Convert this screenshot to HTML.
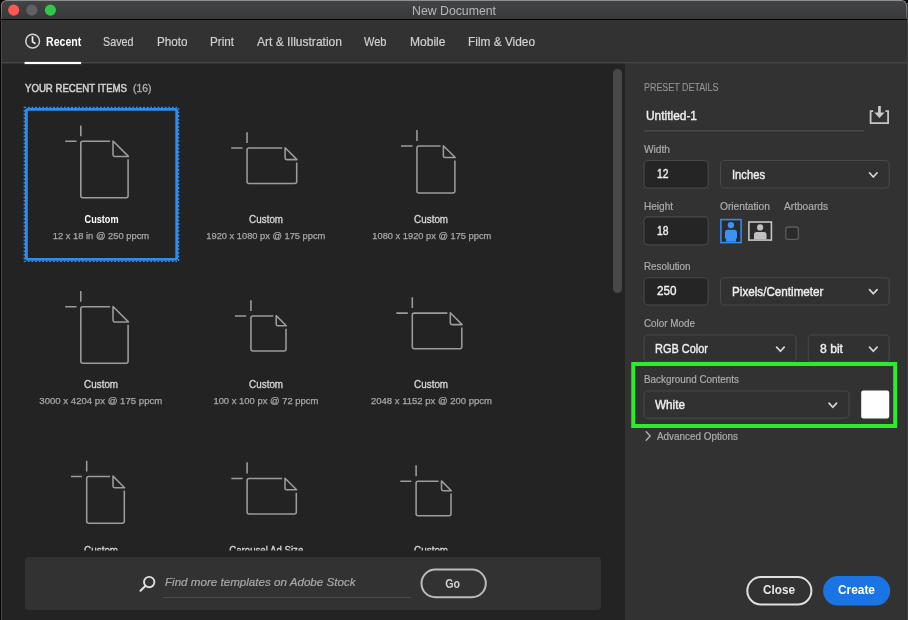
<!DOCTYPE html>
<html><head><meta charset="utf-8"><title>New Document</title>
<style>
html,body{margin:0;padding:0;background:#222;}
body{width:908px;height:620px;position:relative;overflow:hidden;font-family:"Liberation Sans",sans-serif;}
.a{position:absolute;box-sizing:border-box;}
.t{position:absolute;white-space:pre;display:block;}
.in{background:#222;border:1px solid #424242;border-radius:4px;}
.sel{background:#303030;border:1px solid #464646;border-radius:4px;}
</style></head><body>
<!-- window frame -->
<div class="a" style="left:0;top:0;width:908px;height:620px;background:#232323;"></div>
<!-- title bar -->
<div class="a" style="left:0;top:0;width:908px;height:20px;background:#000;"></div>
<div class="a" style="left:1px;top:0;width:906px;height:19px;background:linear-gradient(#909090,#5a5a5c);border-radius:5.5px 5.5px 0 0;"></div>
<div class="a" style="left:2px;top:1px;width:904px;height:18px;background:linear-gradient(#424345,#38393b);border-radius:4.5px 4.5px 0 0;"></div>
<!-- tab bar -->
<div class="a" style="left:0;top:20px;width:908px;height:43px;background:#323232;"></div>
<!-- right panel -->
<div class="a" style="left:625px;top:63px;width:283px;height:557px;background:#323232;"></div>
<!-- scrollbar -->
<div class="a" style="left:613px;top:69.2px;width:9.3px;height:223.8px;border-radius:4.6px;background:#484848;"></div>
<!-- left edge -->
<div class="a" style="left:0;top:3px;width:1px;height:617px;background:#050505;"></div>
<div class="a" style="left:1px;top:20px;width:1px;height:600px;background:#484848;"></div>
<div class="a" style="left:907px;top:3px;width:1px;height:617px;background:#444;"></div>
<!-- selected card -->

<!-- search bar -->
<div class="a" style="left:24.5px;top:556.8px;width:576.3px;height:53.2px;background:#323232;border-radius:4px;"></div>
<div class="a" style="left:163px;top:597px;width:248.3px;height:1px;background:#4c4c4c;"></div>
<!-- right panel fields -->


<svg class="a" style="left:0;top:0" width="908" height="620" viewBox="0 0 908 620">
<rect x="24.3" y="107.4" width="154.3" height="153.9" fill="none" stroke="#2d8cf0" stroke-width="1.3" stroke-dasharray="1.8 1.8"/>
<rect x="26.35" y="109.35" width="150.4" height="150" rx="1.8" fill="none" stroke="#2d8cf0" stroke-width="2.9"/>
<circle cx="13.7" cy="10.1" r="5.6" fill="#fc5753"/>
<circle cx="31.8" cy="10.1" r="5.6" fill="#606062"/>
<circle cx="50.4" cy="10.1" r="5.6" fill="#33c748"/>
<!-- clock -->
<circle cx="32.65" cy="41.15" r="6.85" fill="none" stroke="#d4d4d4" stroke-width="1.5"/>
<path d="M32.5 36.3V41.7L35.5 43.7" fill="none" stroke="#ececec" stroke-width="1.7"/>
<!-- doc icons -->
<g>
<clipPath id="cl"><rect x="0" y="63" width="613" height="487.5"/></clipPath>
<g clip-path="url(#cl)">
<path d="M80.8 125.5V136.3M65.2 141.3H76.5M110.10 141.3H82.8Q80.8 141.3 80.8 143.3V195.7Q80.8 197.7 82.8 197.7H126.1Q128.1 197.7 128.1 195.7V159.30M113.0 141.0L128.4 156.4H114.6Q113.0 156.4 113.0 154.8Z" fill="none" stroke="#9c9c9c" stroke-width="1.55" stroke-linejoin="round" stroke-linecap="butt"/>
<path d="M247.05 132.2V142.9M231.2 148H242.6M282.20 148H249.05Q247.05 148 247.05 150.0V181.55Q247.05 183.55 249.05 183.55H294.7Q296.7 183.55 296.7 181.55V162.50M285.1 147.7L297.0 159.6H286.70000000000005Q285.1 159.6 285.1 158.0Z" fill="none" stroke="#9c9c9c" stroke-width="1.55" stroke-linejoin="round" stroke-linecap="butt"/>
<path d="M416.95 130V141.1M401 146H412.6M440.50 146H418.95Q416.95 146 416.95 148.0V190.9Q416.95 192.9 418.95 192.9H452.9Q454.9 192.9 454.9 190.9V160.40M443.4 145.7L455.2 157.5H445.0Q443.4 157.5 443.4 155.9Z" fill="none" stroke="#9c9c9c" stroke-width="1.55" stroke-linejoin="round" stroke-linecap="butt"/>
<path d="M80.8 291V301.8M65.2 306.8H76.5M110.10 306.8H82.8Q80.8 306.8 80.8 308.8V361.2Q80.8 363.2 82.8 363.2H126.1Q128.1 363.2 128.1 361.2V324.80M113.0 306.5L128.4 321.9H114.6Q113.0 321.9 113.0 320.29999999999995Z" fill="none" stroke="#9c9c9c" stroke-width="1.55" stroke-linejoin="round" stroke-linecap="butt"/>
<path d="M250.95 300.2V311.1M234.9 315.95H246.2M273.30 315.95H252.95Q250.95 315.95 250.95 317.95V348.9Q250.95 350.9 252.95 350.9H284.0Q286 350.9 286 348.9V328.65M276.2 315.65L286.3 325.75H277.8Q276.2 325.75 276.2 324.15Z" fill="none" stroke="#9c9c9c" stroke-width="1.55" stroke-linejoin="round" stroke-linecap="butt"/>
<path d="M412.3 297.3V308.1M396.3 313.1H407.8M447.40 313.1H414.3Q412.3 313.1 412.3 315.1V346.7Q412.3 348.7 414.3 348.7H459.8Q461.8 348.7 461.8 346.7V327.50M450.3 312.8L462.1 324.6H451.90000000000003Q450.3 324.6 450.3 323.0Z" fill="none" stroke="#9c9c9c" stroke-width="1.55" stroke-linejoin="round" stroke-linecap="butt"/>
<path d="M86.7 460.8V471.6M71 476.4H81.9M110.10 476.4H88.7Q86.7 476.4 86.7 478.4V521.3Q86.7 523.3 88.7 523.3H122.3Q124.3 523.3 124.3 521.3V490.60M113.0 476.09999999999997L124.6 487.7H114.6Q113.0 487.7 113.0 486.09999999999997Z" fill="none" stroke="#9c9c9c" stroke-width="1.55" stroke-linejoin="round" stroke-linecap="butt"/>
<path d="M247.1 462.3V473.5M231.3 478.5H242.6M282.10 478.5H249.1Q247.1 478.5 247.1 480.5V512.0Q247.1 514 249.1 514H294.3Q296.3 514 296.3 512.0V492.70M285.0 478.2L296.6 489.8H286.6Q285.0 489.8 285.0 488.2Z" fill="none" stroke="#9c9c9c" stroke-width="1.55" stroke-linejoin="round" stroke-linecap="butt"/>
<path d="M416.1 465.2V476.3M400.3 481.2H411.3M438.60 481.2H418.1Q416.1 481.2 416.1 483.2V513.7Q416.1 515.7 418.1 515.7H449.0Q451 515.7 451 513.7V493.60M441.5 480.9L451.3 490.7H443.1Q441.5 490.7 441.5 489.09999999999997Z" fill="none" stroke="#9c9c9c" stroke-width="1.55" stroke-linejoin="round" stroke-linecap="butt"/>
</g>
</g>
<!-- search icon -->
<circle cx="149.2" cy="582.1" r="5.2" fill="none" stroke="#dedede" stroke-width="1.9"/>
<path d="M145.4 586.1L140.5 590.7" stroke="#dedede" stroke-width="2.1" stroke-linecap="round"/>
<rect x="644" y="130.2" width="220" height="1.4" fill="#4c4c4c"/>
<rect x="2" y="62" width="905" height="1.5" fill="#444444"/>
<rect x="24.6" y="61.9" width="56.5" height="2.2" fill="#ffffff"/>
<!-- buttons -->
<rect x="421.5" y="569.6" width="64.3" height="27.6" rx="13.8" fill="none" stroke="#bcbcbc" stroke-width="2"/>
<rect x="747.3" y="577.1" width="64.1" height="27.4" rx="13.7" fill="none" stroke="#e0e0e0" stroke-width="2"/>
<rect x="823.1" y="576.1" width="67.1" height="29.4" rx="14.7" fill="#1b74e4"/>
<!-- fields -->
<rect x="644.05" y="160.45" width="64.10" height="27.50" rx="4" fill="#252525" stroke="#484848" stroke-width="1.1"/>
<rect x="720.55" y="160.45" width="168.60" height="27.50" rx="4" fill="#313131" stroke="#484848" stroke-width="1.1"/>
<rect x="644.05" y="216.85" width="64.10" height="28.00" rx="4" fill="#252525" stroke="#484848" stroke-width="1.1"/>
<rect x="644.05" y="277.75" width="64.10" height="27.20" rx="4" fill="#252525" stroke="#484848" stroke-width="1.1"/>
<rect x="720.55" y="277.75" width="168.60" height="27.20" rx="4" fill="#313131" stroke="#484848" stroke-width="1.1"/>
<rect x="644.05" y="334.95" width="152.00" height="27.20" rx="4" fill="#313131" stroke="#484848" stroke-width="1.1"/>
<rect x="808.25" y="334.95" width="80.90" height="27.20" rx="4" fill="#313131" stroke="#484848" stroke-width="1.1"/>
<rect x="644.05" y="390.95" width="204.90" height="27.20" rx="4" fill="#313131" stroke="#484848" stroke-width="1.1"/>
<rect x="861.2" y="390.6" width="28" height="27.9" rx="2.2" fill="#ffffff"/>
<path d="M633.25 364.1H895.2V426.1H633.25Z" fill="none" stroke="#2deb2d" stroke-width="4"/>
<!-- save preset icon -->
<path d="M873.2 111.1H870.6V123.1H888.1V111.1H885.4" fill="none" stroke="#c6c6c6" stroke-width="1.8"/>
<path d="M878.1 106H880.8V112.5H884.6L879.45 118L874.3 112.5H878.1Z" fill="#cacaca"/>
<!-- chevrons -->
<path d="M869.5 172.8L873.3 177.0L877.0999999999999 172.8" fill="none" stroke="#d6d6d6" stroke-width="1.7" stroke-linecap="round" stroke-linejoin="round"/>
<path d="M869.5 289.59999999999997L873.3 293.8L877.0999999999999 289.59999999999997" fill="none" stroke="#d6d6d6" stroke-width="1.7" stroke-linecap="round" stroke-linejoin="round"/>
<path d="M776.6 347.09999999999997L780.4 351.3L784.1999999999999 347.09999999999997" fill="none" stroke="#d6d6d6" stroke-width="1.7" stroke-linecap="round" stroke-linejoin="round"/>
<path d="M869.5 347.09999999999997L873.3 351.3L877.0999999999999 347.09999999999997" fill="none" stroke="#d6d6d6" stroke-width="1.7" stroke-linecap="round" stroke-linejoin="round"/>
<path d="M829.0 403.09999999999997L832.8 407.3L836.5999999999999 403.09999999999997" fill="none" stroke="#d6d6d6" stroke-width="1.7" stroke-linecap="round" stroke-linejoin="round"/>
<path d="M646.2 431.8L650.2 436L646.2 440.2" fill="none" stroke="#b0b0b0" stroke-width="1.4" stroke-linecap="round" stroke-linejoin="round"/>
<!-- portrait -->
<rect x="720.9" y="219.6" width="20.2" height="23" fill="#2b2b2b" stroke="#2d8cf0" stroke-width="1.6"/>
<circle cx="730.9" cy="225.1" r="3.2" fill="#3a92f2"/>
<path d="M724.9 238.6V232.6Q724.9 229.7 727.8 229.7H734.1Q737 229.7 737 232.6V238.6H735.9V241.8H726.1V238.6Z" fill="#3a92f2"/>
<!-- landscape -->
<rect x="748.9" y="222" width="22.5" height="18.1" fill="#2b2b2b" stroke="#c4c4c4" stroke-width="1.6"/>
<circle cx="760.1" cy="227.4" r="3.1" fill="#c0c0c0"/>
<path d="M754 239.4V234.6Q754 232.1 756.5 232.1H764Q766.5 232.1 766.5 234.6V239.4Z" fill="#c0c0c0"/>
<!-- checkbox -->
<rect x="785.8" y="227" width="12.6" height="12.4" rx="2.2" fill="#2a2a2a" stroke="#5c5c5c" stroke-width="1.3"/>
</svg>
<div class="a" style="left:0;top:0;width:908px;height:620px;will-change:transform;">
<span class="t" style="left:412.78px;top:2.50px;height:16px;line-height:16px;font-size:12px;color:#b8b8b8;transform:scaleX(1.0240);transform-origin:center center;">New Document</span>
<span class="t" style="left:45.70px;top:32.80px;height:18px;line-height:18px;font-size:13px;color:#ffffff;transform:scaleX(0.8141);transform-origin:left center;font-weight:700;">Recent</span>
<span class="t" style="left:103.00px;top:32.80px;height:18px;line-height:18px;font-size:13px;color:#d0d0d0;transform:scaleX(0.8271);transform-origin:left center;-webkit-text-stroke:0.2px #d0d0d0;">Saved</span>
<span class="t" style="left:157.00px;top:32.80px;height:18px;line-height:18px;font-size:13px;color:#d0d0d0;transform:scaleX(0.8975);transform-origin:left center;-webkit-text-stroke:0.2px #d0d0d0;">Photo</span>
<span class="t" style="left:210.00px;top:32.80px;height:18px;line-height:18px;font-size:13px;color:#d0d0d0;transform:scaleX(0.8977);transform-origin:left center;-webkit-text-stroke:0.2px #d0d0d0;">Print</span>
<span class="t" style="left:256.50px;top:32.80px;height:18px;line-height:18px;font-size:13px;color:#d0d0d0;transform:scaleX(0.9263);transform-origin:left center;-webkit-text-stroke:0.2px #d0d0d0;">Art &amp; Illustration</span>
<span class="t" style="left:364.00px;top:32.80px;height:18px;line-height:18px;font-size:13px;color:#d0d0d0;transform:scaleX(0.8491);transform-origin:left center;-webkit-text-stroke:0.2px #d0d0d0;">Web</span>
<span class="t" style="left:410.00px;top:32.80px;height:18px;line-height:18px;font-size:13px;color:#d0d0d0;transform:scaleX(0.9270);transform-origin:left center;-webkit-text-stroke:0.2px #d0d0d0;">Mobile</span>
<span class="t" style="left:468.00px;top:32.80px;height:18px;line-height:18px;font-size:13px;color:#d0d0d0;transform:scaleX(0.9120);transform-origin:left center;-webkit-text-stroke:0.2px #d0d0d0;">Film &amp; Video</span>
<span class="t" style="left:24.50px;top:81.50px;height:14px;line-height:14px;font-size:10px;color:#d0d0d0;transform:scaleX(0.9628);transform-origin:left center;-webkit-text-stroke:0.5px #d0d0d0;">YOUR RECENT ITEMS</span>
<span class="t" style="left:132.50px;top:81.50px;height:14px;line-height:14px;font-size:10px;color:#b0b0b0;transform:scaleX(1.0395);transform-origin:left center;-webkit-text-stroke:0.3px #b0b0b0;">(16)</span>
<span class="t" style="left:81.65px;top:211.70px;height:15px;line-height:15px;font-size:10.5px;color:#ffffff;transform:scaleX(0.8697);transform-origin:center center;font-weight:700;">Custom</span>
<span class="t" style="left:52.28px;top:228.80px;height:13px;line-height:13px;font-size:9.5px;color:#a6a6a6;transform:scaleX(0.9863);transform-origin:center center;-webkit-text-stroke:0.25px #a6a6a6;">12 x 18 in @ 250 ppcm</span>
<span class="t" style="left:248.11px;top:211.70px;height:15px;line-height:15px;font-size:10.5px;color:#d8d8d8;transform:scaleX(0.9396);transform-origin:center center;-webkit-text-stroke:0.3px #d8d8d8;">Custom</span>
<span class="t" style="left:205.39px;top:228.80px;height:13px;line-height:13px;font-size:9.5px;color:#a6a6a6;transform:scaleX(0.9784);transform-origin:center center;-webkit-text-stroke:0.25px #a6a6a6;">1920 x 1080 px @ 175 ppcm</span>
<span class="t" style="left:413.31px;top:211.70px;height:15px;line-height:15px;font-size:10.5px;color:#d8d8d8;transform:scaleX(0.9396);transform-origin:center center;-webkit-text-stroke:0.3px #d8d8d8;">Custom</span>
<span class="t" style="left:370.59px;top:228.80px;height:13px;line-height:13px;font-size:9.5px;color:#a6a6a6;transform:scaleX(0.9784);transform-origin:center center;-webkit-text-stroke:0.25px #a6a6a6;">1080 x 1920 px @ 175 ppcm</span>
<span class="t" style="left:83.11px;top:377.30px;height:15px;line-height:15px;font-size:10.5px;color:#d8d8d8;transform:scaleX(0.9396);transform-origin:center center;-webkit-text-stroke:0.3px #d8d8d8;">Custom</span>
<span class="t" style="left:40.39px;top:394.40px;height:13px;line-height:13px;font-size:9.5px;color:#a6a6a6;transform:scaleX(1.0113);transform-origin:center center;-webkit-text-stroke:0.25px #a6a6a6;">3000 x 4204 px @ 175 ppcm</span>
<span class="t" style="left:248.11px;top:377.30px;height:15px;line-height:15px;font-size:10.5px;color:#d8d8d8;transform:scaleX(0.9396);transform-origin:center center;-webkit-text-stroke:0.3px #d8d8d8;">Custom</span>
<span class="t" style="left:213.32px;top:394.40px;height:13px;line-height:13px;font-size:9.5px;color:#a6a6a6;transform:scaleX(0.9928);transform-origin:center center;-webkit-text-stroke:0.25px #a6a6a6;">100 x 100 px @ 72 ppcm</span>
<span class="t" style="left:413.31px;top:377.30px;height:15px;line-height:15px;font-size:10.5px;color:#d8d8d8;transform:scaleX(0.9396);transform-origin:center center;-webkit-text-stroke:0.3px #d8d8d8;">Custom</span>
<span class="t" style="left:370.94px;top:394.40px;height:13px;line-height:13px;font-size:9.5px;color:#a6a6a6;transform:scaleX(1.0006);transform-origin:center center;-webkit-text-stroke:0.25px #a6a6a6;">2048 x 1152 px @ 200 ppcm</span>
<span class="t" style="left:83.11px;top:542.70px;height:15px;line-height:15px;font-size:10.5px;color:#d8d8d8;transform:scaleX(0.9396);transform-origin:center center;-webkit-text-stroke:0.3px #d8d8d8;">Custom</span>
<span class="t" style="left:225.93px;top:542.70px;height:15px;line-height:15px;font-size:10.5px;color:#d8d8d8;transform:scaleX(0.9187);transform-origin:center center;-webkit-text-stroke:0.3px #d8d8d8;">Carousel Ad Size</span>
<span class="t" style="left:413.31px;top:542.70px;height:15px;line-height:15px;font-size:10.5px;color:#d8d8d8;transform:scaleX(0.9396);transform-origin:center center;-webkit-text-stroke:0.3px #d8d8d8;">Custom</span>
<span class="t" style="left:165.00px;top:574.20px;height:16px;line-height:16px;font-size:11.5px;color:#a8a8a8;transform:scaleX(1.0090);transform-origin:left center;-webkit-text-stroke:0.2px #a8a8a8;font-style:italic;">Find more templates on Adobe Stock</span>
<span class="t" style="left:444.32px;top:575.90px;height:17px;line-height:17px;font-size:12.5px;color:#d0d0d0;transform:scaleX(0.8526);transform-origin:center center;font-weight:700;">Go</span>
<span class="t" style="left:643.50px;top:81.00px;height:14px;line-height:14px;font-size:10px;color:#949494;transform:scaleX(0.8917);transform-origin:left center;-webkit-text-stroke:0.1px #949494;">PRESET DETAILS</span>
<span class="t" style="left:646.30px;top:107.70px;height:17px;line-height:17px;font-size:12.5px;color:#f0f0f0;transform:scaleX(0.9533);transform-origin:left center;-webkit-text-stroke:0.38px #f0f0f0;">Untitled-1</span>
<span class="t" style="left:643.50px;top:141.50px;height:15px;line-height:15px;font-size:10.5px;color:#acacac;transform:scaleX(0.9686);transform-origin:left center;-webkit-text-stroke:0.2px #acacac;">Width</span>
<span class="t" style="left:657.00px;top:165.80px;height:17px;line-height:17px;font-size:12.5px;color:#f0f0f0;transform:scaleX(0.8270);transform-origin:left center;-webkit-text-stroke:0.38px #f0f0f0;">12</span>
<span class="t" style="left:732.00px;top:166.90px;height:17px;line-height:17px;font-size:12.5px;color:#f0f0f0;transform:scaleX(0.8957);transform-origin:left center;-webkit-text-stroke:0.38px #f0f0f0;">Inches</span>
<span class="t" style="left:643.50px;top:199.00px;height:15px;line-height:15px;font-size:10.5px;color:#acacac;transform:scaleX(0.9552);transform-origin:left center;-webkit-text-stroke:0.2px #acacac;">Height</span>
<span class="t" style="left:720.00px;top:199.00px;height:15px;line-height:15px;font-size:10.5px;color:#acacac;transform:scaleX(0.9732);transform-origin:left center;-webkit-text-stroke:0.2px #acacac;">Orientation</span>
<span class="t" style="left:784.00px;top:199.00px;height:15px;line-height:15px;font-size:10.5px;color:#acacac;transform:scaleX(0.9664);transform-origin:left center;-webkit-text-stroke:0.2px #acacac;">Artboards</span>
<span class="t" style="left:657.00px;top:223.00px;height:17px;line-height:17px;font-size:12.5px;color:#f0f0f0;transform:scaleX(0.8270);transform-origin:left center;-webkit-text-stroke:0.38px #f0f0f0;">18</span>
<span class="t" style="left:643.50px;top:258.50px;height:15px;line-height:15px;font-size:10.5px;color:#acacac;transform:scaleX(0.9370);transform-origin:left center;-webkit-text-stroke:0.2px #acacac;">Resolution</span>
<span class="t" style="left:657.00px;top:283.30px;height:17px;line-height:17px;font-size:12.5px;color:#f0f0f0;transform:scaleX(0.9348);transform-origin:left center;-webkit-text-stroke:0.38px #f0f0f0;">250</span>
<span class="t" style="left:732.00px;top:283.80px;height:17px;line-height:17px;font-size:12.5px;color:#f0f0f0;transform:scaleX(0.9341);transform-origin:left center;-webkit-text-stroke:0.38px #f0f0f0;">Pixels/Centimeter</span>
<span class="t" style="left:643.50px;top:315.80px;height:15px;line-height:15px;font-size:10.5px;color:#acacac;transform:scaleX(0.9396);transform-origin:left center;-webkit-text-stroke:0.2px #acacac;">Color Mode</span>
<span class="t" style="left:655.30px;top:341.30px;height:17px;line-height:17px;font-size:12.5px;color:#f0f0f0;transform:scaleX(0.8769);transform-origin:left center;-webkit-text-stroke:0.38px #f0f0f0;">RGB Color</span>
<span class="t" style="left:819.50px;top:341.30px;height:17px;line-height:17px;font-size:12.5px;color:#f0f0f0;transform:scaleX(0.9729);transform-origin:left center;-webkit-text-stroke:0.38px #f0f0f0;">8 bit</span>
<span class="t" style="left:643.50px;top:371.80px;height:15px;line-height:15px;font-size:10.5px;color:#acacac;transform:scaleX(0.9407);transform-origin:left center;-webkit-text-stroke:0.2px #acacac;">Background Contents</span>
<span class="t" style="left:655.30px;top:397.30px;height:17px;line-height:17px;font-size:12.5px;color:#f0f0f0;transform:scaleX(0.9389);transform-origin:left center;-webkit-text-stroke:0.38px #f0f0f0;">White</span>
<span class="t" style="left:657.00px;top:428.50px;height:15px;line-height:15px;font-size:10.5px;color:#acacac;transform:scaleX(0.9439);transform-origin:left center;-webkit-text-stroke:0.2px #acacac;">Advanced Options</span>
<span class="t" style="left:762.18px;top:582.10px;height:17px;line-height:17px;font-size:12.5px;color:#e8e8e8;transform:scaleX(0.9399);transform-origin:center center;font-weight:700;">Close</span>
<span class="t" style="left:836.94px;top:582.10px;height:17px;line-height:17px;font-size:12.5px;color:#ffffff;transform:scaleX(0.9506);transform-origin:center center;font-weight:700;">Create</span>
<svg class="a" style="left:0;top:0" width="908" height="620"><rect x="2" y="550.5" width="611" height="6.3" fill="#232323"/></svg>
</div>
</body></html>
